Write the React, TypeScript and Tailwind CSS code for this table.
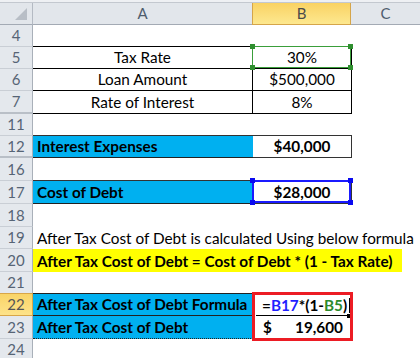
import React from "react";

type RowProps = {
  num: string;
  h: string;
  hdr?: string;
  a?: React.ReactNode;
  b?: React.ReactNode;
  c?: React.ReactNode;
  aCls?: string;
  bCls?: string;
  cCls?: string;
};

function Row({ num, h, hdr, a, b, c, aCls = "", bCls = "", cCls = "" }: RowProps) {
  return (
    <div className={`flex ${h}`}>
      <div
        className={`w-[33px] shrink-0 flex items-center justify-center text-[15px] ${
          hdr ?? "bg-[#e4e8ed] text-[#566475] border-r border-b border-r-[#a9b0b9] border-b-[#c9ced5]"
        }`}
      >
        {num}
      </div>
      <div className={`w-[220px] shrink-0 flex items-center whitespace-nowrap ${aCls}`}>{a}</div>
      <div className={`w-[99px] shrink-0 flex items-center whitespace-nowrap ${bCls}`}>{b}</div>
      <div className={`flex-1 flex items-center whitespace-nowrap ${cCls}`}>{c}</div>
    </div>
  );
}

const Handle = ({ cls }: { cls: string }) => <div className={`absolute w-[5px] h-[5px] ${cls}`} />;

export default function App() {
  return (
    <div
      className="relative w-[420px] h-[358px] overflow-hidden bg-white text-black text-[15.3px]"
      style={{ fontFamily: "Lato, 'Open Sans', sans-serif" }}
    >
      {/* top strip */}
      <div className="h-[3px] bg-[#eef0f3] border-b border-[#c3c8cf]" />
      {/* column header */}
      <div className="flex h-[22px] text-[15px] text-[#4f5d6e]">
        <div className="relative w-[33px] shrink-0 bg-[#e2e6eb] border-r border-b border-r-[#b4bac3] border-b-[#a3aab4]">
          <div className="absolute right-[5px] bottom-[4px] w-0 h-0 border-l-[12px] border-l-transparent border-b-[12px] border-b-[#b8bec6]" />
        </div>
        <div className="w-[220px] shrink-0 flex items-center justify-center bg-[#e2e6eb] border-r border-b border-r-[#c3c8cf] border-b-[#a3aab4]">
          A
        </div>
        <div className="w-[99px] shrink-0 flex items-center justify-center bg-gradient-to-b from-[#f9d262] to-[#fde88f] border-r border-b border-l border-[#d5a54a] -ml-px text-[#4a4a4a]">
          B
        </div>
        <div className="flex-1 flex items-center justify-center bg-[#e2e6eb] border-b border-b-[#a3aab4]">C</div>
      </div>

      <Row num="4" h="h-[22px]" aCls="border-b border-black" bCls="border-b border-black" />
      <Row
        num="5"
        h="h-[22px]"
        a="Tax Rate"
        aCls="justify-center border-b border-r border-black"
        b={
          <>
            <span>30%</span>
            <div className="absolute -top-px -left-px right-0 bottom-0 border border-[#3a9e3a]" />
            <Handle cls="-top-[3px] -left-[3px] bg-[#2f8f2f]" />
            <Handle cls="-top-[3px] -right-[2px] bg-[#2f8f2f]" />
            <Handle cls="-bottom-[2px] -left-[3px] bg-[#2f8f2f]" />
            <Handle cls="-bottom-[2px] -right-[2px] bg-[#2f8f2f]" />
          </>
        }
        bCls="relative justify-center border-b border-r border-black"
      />
      <Row
        num="6"
        h="h-[22px]"
        a="Loan Amount"
        aCls="justify-center border-b border-r border-black"
        b="$500,000"
        bCls="justify-center border-b border-r border-black"
      />
      <Row
        num="7"
        h="h-[23px]"
        hdr="bg-[#e4e8ed] text-[#566475] border-r border-b-2 border-r-[#a9b0b9] border-b-[#b9bfc7]"
        a="Rate of Interest"
        aCls="justify-center border-b border-r border-black"
        b="8%"
        bCls="justify-center border-b border-r border-black"
      />
      <Row num="11" h="h-[22px]" aCls="border-b border-[#333]" bCls="border-b border-[#333]" />
      <Row
        num="12"
        h="h-[22px]"
        hdr="bg-[#e4e8ed] text-[#566475] border-r border-b-2 border-r-[#a9b0b9] border-b-[#b9bfc7]"
        a={<span className="pl-[4px] font-bold">Interest Expenses</span>}
        aCls="bg-[#00b0f0] border-b border-[#222]"
        b={<span className="font-bold">$40,000</span>}
        bCls="justify-center border-b border-r border-[#333]"
      />
      <Row num="16" h="h-[23px]" aCls="border-b border-[#333]" bCls="border-b border-[#333]" />
      <Row
        num="17"
        h="h-[23px]"
        a={<span className="pl-[4px] font-bold">Cost of Debt</span>}
        aCls="bg-[#00b0f0] border-b border-[#222]"
        b={
          <>
            <span className="font-bold">$28,000</span>
            <div className="absolute -top-px -left-px right-0 bottom-0 border-2 border-[#1a1aff]" />
            <Handle cls="-top-[3px] -left-[3px] bg-[#0a0af0]" />
            <Handle cls="-top-[3px] -right-[2px] bg-[#0a0af0]" />
            <Handle cls="-bottom-[2px] -left-[3px] bg-[#0a0af0]" />
            <Handle cls="-bottom-[2px] -right-[2px] bg-[#0a0af0]" />
          </>
        }
        bCls="relative justify-center border-b border-r border-[#333]"
      />
      <Row num="18" h="h-[23px]" />
      <Row
        num="19"
        h="h-[22px]"
        a={<span className="pl-[4px]">After Tax Cost of Debt is calculated Using below formula</span>}
        aCls="overflow-visible"
      />
      <Row
        num="20"
        h="h-[23px]"
        a={
          <div className="w-[369px] h-full pt-px shrink-0 bg-[#ffff00] flex items-center pl-[4px] font-bold">
            After Tax Cost of Debt = Cost of Debt * (1 - Tax Rate)
          </div>
        }
        aCls="overflow-visible"
      />
      <Row num="21" h="h-[22px]" aCls="border-b border-[#222]" />
      <Row
        num="22"
        h="h-[22px]"
        hdr="bg-gradient-to-b from-[#f9d467] to-[#fde38a] text-[#555] border-r border-b border-t border-[#d8a648] -mt-px"
        a={<span className="pl-[4px] font-bold">After Tax Cost of Debt Formula</span>}
        aCls="bg-[#00b0f0] border-b border-[#222] overflow-hidden"
        b={
          <>
            <span className="pl-[9px] font-bold">
              =<span className="text-[#1f1fff]">B17</span>*(1-<span className="text-[#2c8a2c]">B5</span>)
            </span>
            <span className="ml-[2px] w-px h-[15px] bg-black" />
            <div className="absolute left-[3px] right-[3px] bottom-0 h-px bg-black" />
            <div className="absolute right-[1px] -bottom-[2px] w-[4px] h-[4px] bg-black" />
          </>
        }
        bCls="relative"
      />
      <Row
        num="23"
        h="h-[23px]"
        a={<span className="pl-[4px] font-bold">After Tax Cost of Debt</span>}
        aCls="bg-[#00b0f0] border-b border-dotted border-[#222]"
        b={
          <div className="w-full flex justify-between pl-[10px] pr-[9px] font-bold">
            <span>$</span>
            <span>19,600</span>
          </div>
        }
      />
      <Row num="24" h="h-[22px]" />

      {/* red annotation box */}
      <div className="absolute left-[252px] top-[292px] w-[101px] h-[49px] border-[3px] border-[#ec1c24]" />
    </div>
  );
}
